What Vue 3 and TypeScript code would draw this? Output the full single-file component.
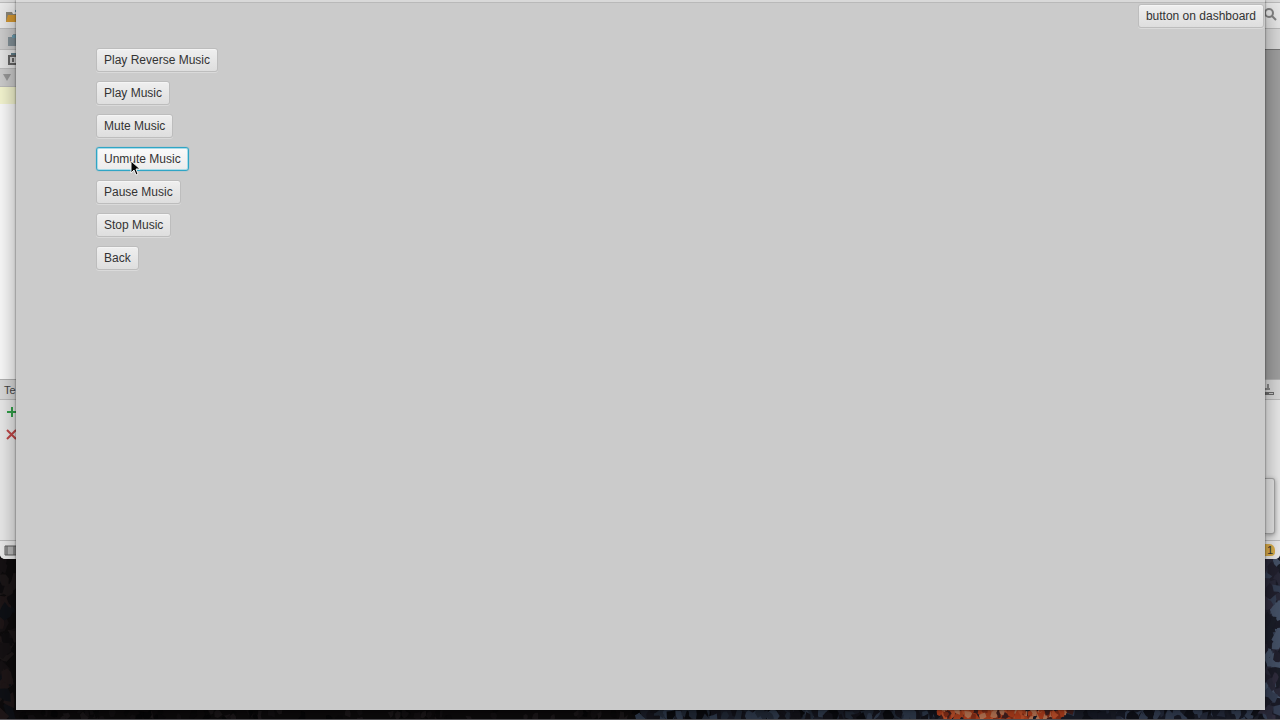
<script setup lang="ts">
import { ref } from 'vue'

const actions: string[] = [
  'Play Reverse Music',
  'Play Music',
  'Mute Music',
  'Unmute Music',
  'Pause Music',
  'Stop Music',
  'Back',
]
const active = ref('Unmute Music')

interface Rock {
  points: string
  fill: string
}

let seed = 41
function rand(): number {
  seed = (seed * 16807) % 2147483647
  return seed / 2147483647
}

function rocks(n: number, x: number, y: number, w: number, h: number, size: number, fills: string[]): Rock[] {
  return Array.from({ length: n }, () => {
    const cx = x + rand() * w
    const cy = y + rand() * h
    const pts: string[] = []
    for (let k = 0; k < 7; k++) {
      const a = (k / 7) * Math.PI * 2
      const r = size * (0.3 + rand() * 0.7)
      pts.push(`${(cx + Math.cos(a) * r).toFixed(1)},${(cy + Math.sin(a) * r * 1.3).toFixed(1)}`)
    }
    return { points: pts.join(' '), fill: fills[Math.floor(rand() * fills.length)] }
  })
}

const scenery: Rock[] = [
  ...rocks(36, 0, 560, 16, 160, 9, ['#0e0c0e', '#151113', '#1b1617', '#0e1015', '#1e1617']),
  ...rocks(90, 20, 710, 620, 10, 5, ['#0a090a', '#131012', '#1b1719', '#070708']),
  ...rocks(110, 640, 710, 300, 10, 7, ['#13131a', '#222a37', '#303b4d', '#15151d', '#0a0b0f']),
  ...rocks(70, 1070, 710, 195, 10, 7, ['#171a26', '#343f54', '#262c3d', '#10121a']),
  ...rocks(110, 938, 710, 132, 10, 5, ['#b8401d', '#c9552d', '#8b3019', '#c47d5a', '#46211f', '#b34420']),
  ...rocks(80, 1262, 556, 20, 164, 8, ['#1b1c28', '#2a2a3a', '#353f54', '#465369', '#22212f', '#302d3e']),
]
</script>

<template>
  <div class="desktop">
    <svg class="wallpaper" viewBox="0 0 1280 720" preserveAspectRatio="none" aria-hidden="true">
      <rect width="640" height="720" fill="#0d0b0c" />
      <rect x="640" width="640" height="720" fill="#1b1e29" />
      <polygon v-for="(r, i) in scenery" :key="i" :points="r.points" :fill="r.fill" />
      <rect y="719" width="1280" height="1" fill="#5c5a5e" />
    </svg>

    <div class="ide">
      <div class="edge left">
        <div class="bar title"></div>
        <div class="bar tools">
          <svg width="18" height="14" viewBox="0 0 18 14">
            <path d="M0 3h6l1 2h9v8H0z" fill="#8b8779" />
            <path d="M2 6h16l-3 7H0z" fill="#d79a32" />
            <path d="M9 2h7" stroke="#78a3b5" stroke-width="2" />
          </svg>
        </div>
        <div class="bar nav">
          <svg width="12" height="13" viewBox="0 0 12 13">
            <path d="M0 4h5V1h7v12H0z" fill="#849299" />
            <path d="M4 2h6v3H4z" fill="#6fa0b2" />
          </svg>
        </div>
        <div class="bar tabs">
          <svg width="9" height="12" viewBox="0 0 9 12">
            <path d="M1 3h9v8H1z" fill="#d5d5d5" stroke="#666" stroke-width="2" />
            <path d="M4 5h2v4H4z" fill="#666" />
            <path d="M3 1h6" stroke="#62808c" stroke-width="2" />
          </svg>
        </div>
        <div class="bar tree">
          <svg width="8" height="7" viewBox="0 0 8 7"><path d="M0 0h8L4 7z" fill="#9a9a9a" /></svg>
        </div>
        <div class="bar highlight"></div>
        <div class="editor"></div>
        <div class="bar panel-title">Te</div>
        <div class="panel">
          <svg width="12" height="12" viewBox="0 0 12 12"><path d="M6 1v10M1 6h10" stroke="#32a34a" stroke-width="2" /></svg>
          <svg width="12" height="12" viewBox="0 0 12 12"><path d="M1 1l9 9M10 1l-9 9" stroke="#c34848" stroke-width="2" /></svg>
        </div>
        <div class="bar status">
          <svg width="13" height="11" viewBox="0 0 13 11">
            <path d="M1 1h11v9H1zM3 1v9M10 1v9" fill="#bababa" stroke="#616161" />
          </svg>
        </div>
      </div>

      <div class="edge right">
        <div class="bar title"></div>
        <div class="bar tools">
          <svg width="15" height="15" viewBox="0 0 15 15">
            <circle cx="4" cy="5" r="4" fill="none" stroke="#858585" stroke-width="2" />
            <path d="M7 8l4 4" stroke="#858585" stroke-width="2" />
          </svg>
        </div>
        <div class="bar gutter"></div>
        <div class="editor dark"></div>
        <div class="bar panel-title">
          <svg width="10" height="12" viewBox="0 0 10 12">
            <path d="M3 0v5M0 5h5" stroke="#8a8a8a" stroke-width="2" />
            <path d="M0 8h9v3H0z" fill="#6e6e6e" />
            <path d="M4 9h4v1H4z" fill="#ccc" />
          </svg>
        </div>
        <div class="panel"><div class="popup"></div></div>
        <div class="bar status"><span class="count">1</span></div>
      </div>
    </div>

    <main class="stage">
      <div class="strip"></div>
      <div class="top"><button type="button" class="fx">button on dashboard</button></div>
      <div class="menu">
        <div v-for="label in actions" :key="label" class="item">
          <button type="button" class="fx" :class="{ focused: label === active }" @click="active = label">
            {{ label }}
          </button>
          <svg v-if="label === 'Unmute Music'" class="pointer" width="12" height="18" viewBox="0 0 12 18" aria-hidden="true">
            <path d="M1 1v12l3-3 2 5 2-1-2-5h4z" fill="#050505" stroke="#f2f2f2" stroke-width="1" />
          </svg>
        </div>
      </div>
    </main>
  </div>
</template>

<style>
body {
  margin: 0;
}
</style>

<style scoped>
.desktop {
  position: relative;
  min-height: 100vh;
  overflow: hidden;
  display: flex;
  font-family: "Liberation Sans", Arial, sans-serif;
}
.wallpaper {
  position: absolute;
  inset: 0;
  width: 100%;
  height: 100%;
}
.ide {
  position: absolute;
  inset: 0 0 161px;
  display: flex;
  justify-content: space-between;
  background: #e8e8e8;
  border-radius: 0 0 5px 5px;
  overflow: hidden;
}
.edge {
  display: flex;
  flex-direction: column;
  width: 16px;
  overflow: hidden;
}
.edge.right {
  width: 15px;
}
.edge svg {
  display: block;
  flex: none;
}
.bar {
  box-sizing: border-box;
  display: flex;
  align-items: center;
  flex: none;
  border-bottom: 1px solid #bdbdbd;
}
.title {
  height: 3px;
  background: #dedede;
}
.tools {
  height: 26px;
  background: #ececec;
}
.left .bar {
  padding-left: 6px;
}
.nav {
  height: 21px;
  background: #cfcfcf;
}
.left .nav,
.left .tabs {
  padding-left: 8px;
}
.tabs {
  height: 19px;
  background: #e8e8e8;
}
.left .tree {
  height: 18px;
  padding-left: 3px;
  background: #cecece;
}
.highlight {
  height: 17px;
  border: 0;
  background: #f7f8d2;
}
.editor {
  flex: 1;
  background: #fdfdfd;
}
.editor.dark {
  background: #a2a2a2;
}
.gutter {
  height: 21px;
  background: #dedede;
  border-bottom-color: #777;
}
.panel-title {
  height: 21px;
  border-top: 1px solid #b4b4b4;
  background: #dcdcdc;
  color: #444;
  font-size: 11px;
}
.left .panel-title {
  padding-left: 4px;
}
.panel {
  height: 140px;
  box-sizing: border-box;
  background: #ececec;
}
.left .panel {
  display: flex;
  flex-direction: column;
  gap: 11px;
  padding: 6px 0 0 6px;
}
.right .panel {
  padding-top: 78px;
}
.popup {
  width: 9px;
  height: 54px;
  border: 1px solid #aaa;
  border-left: 0;
  border-radius: 0 3px 3px 0;
  background: #e8e8e8;
  box-shadow: 0 1px 4px #999;
}
.status {
  height: 19px;
  border: 0;
  border-top: 1px solid #c0c0c0;
  background: #eee;
}
.left .status {
  padding-left: 4px;
}
.count {
  width: 10px;
  height: 12px;
  border-radius: 0 6px 4px 0;
  background: #deb04b;
  color: #333;
  font-size: 11px;
  line-height: 12px;
  text-align: center;
}
.stage {
  position: relative;
  flex: 1;
  margin: 0 15px 10px 16px;
  background: #cbcbcb;
  box-shadow: 0 0 2px rgba(0, 0, 0, 0.6), 0 4px 24px rgba(0, 0, 0, 0.4);
}
.strip {
  height: 3px;
  box-sizing: border-box;
  background: #d9d9d9;
  border-bottom: 1px solid #b9b9b9;
}
.top {
  display: flex;
  justify-content: flex-end;
  padding: 1px 1px 0 0;
}
.menu {
  display: flex;
  flex-direction: column;
  align-items: flex-start;
  gap: 9px;
  padding: 20px 0 0 80px;
}
.item {
  position: relative;
  display: flex;
}
.fx {
  box-sizing: border-box;
  height: 24px;
  padding: 0 7px;
  border: 1px solid #bdbdbd;
  border-radius: 3px;
  background: linear-gradient(#efefef, #dedede);
  box-shadow: inset 0 1px #f5f5f5, 0 1px #dadada;
  color: #333;
  font-family: inherit;
  font-size: 12px;
  line-height: 22px;
  white-space: nowrap;
}
.fx.focused {
  border-color: #2fa5c5;
  background: linear-gradient(#fafafa, #ececec);
  box-shadow: inset 0 0 0 1px #a9dbe8, 0 0 1px #2fa5c5;
  outline: 0;
}
.pointer {
  position: absolute;
  left: 34px;
  top: 13px;
}
</style>
